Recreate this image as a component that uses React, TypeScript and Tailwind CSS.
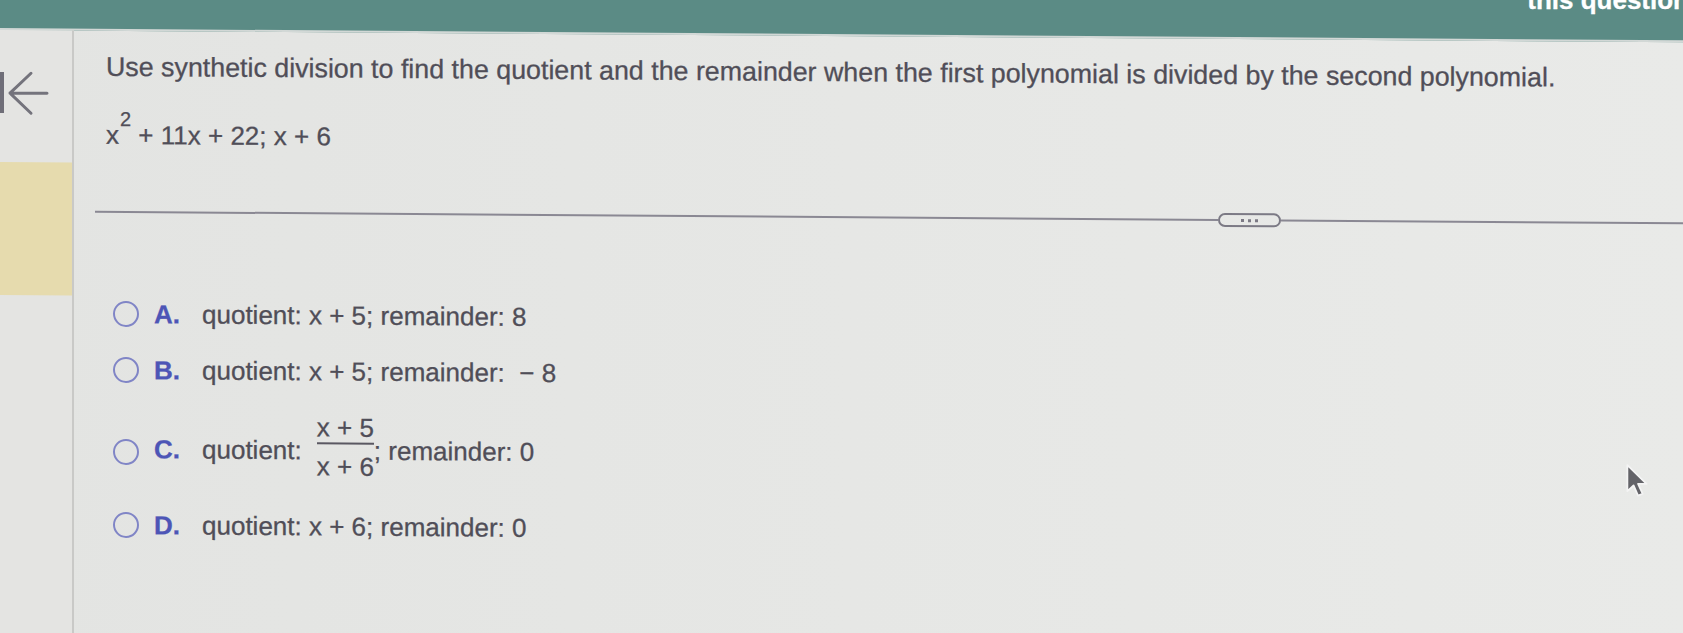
import React from "react";

function Radio({ shift = false }: { shift?: boolean }) {
  return (
    <div
      className={
        "w-[26px] h-[26px] shrink-0 rounded-full border-[2.5px] border-[#8085c6] " +
        (shift ? "mt-[6px]" : "")
      }
    />
  );
}

function Letter({ children }: { children: React.ReactNode }) {
  return (
    <span className="ml-[15px] w-[48px] shrink-0 font-bold text-[#4d55b6] leading-[30px]">
      {children}
    </span>
  );
}

export default function App() {
  return (
    <div className="w-[1683px] h-[633px] overflow-hidden bg-[#5b8b85] font-['Liberation_Sans',Arial,sans-serif] text-[26px] text-[#504e58] [-webkit-text-stroke:0.3px_currentcolor]">
      {/* header */}
      <div className="h-[28px] overflow-hidden flex justify-end">
        <span className="-mt-[15px] -mr-[6px] leading-[30px] font-bold text-white whitespace-nowrap">
          this question
        </span>
      </div>

      {/* page body (photo perspective) */}
      <div className="relative h-[640px] origin-top-left skew-y-[0.42deg] border-t-2 border-[#d2d8d6] bg-linear-to-r from-[#e3e4e2] to-[#e9eae8] flex">
        {/* sidebar */}
        <div className="w-[74px] shrink-0 border-r-2 border-[#c9c9c7] bg-[#e4e4e2] flex flex-col">
          <svg className="mt-[41px]" width="50" height="44" viewBox="0 0 50 44">
            <rect x="0" y="1" width="4" height="41" fill="#6f6e78" />
            <path
              d="M31 2 L10 22 L31 42 M10 22 L47 22"
              fill="none"
              stroke="#74737c"
              strokeWidth="3"
              strokeLinecap="round"
              strokeLinejoin="round"
            />
          </svg>
          <div className="mt-[47px] h-[133px] bg-[#e6dbae]" />
        </div>

        {/* main */}
        <div className="flex-1 pt-[19px] pl-[21px] flex flex-col">
          <div className="pl-[11px] pt-[2px] text-[26.8px] leading-[30px] whitespace-nowrap">
            Use synthetic division to find the quotient and the remainder when the first polynomial is divided by the second polynomial.
          </div>
          <div className="pl-[11px] mt-[38px] leading-[30px] whitespace-nowrap">
            x<span className="relative -top-[18px] ml-[1px] text-[20px] leading-none">2</span> + 11x + 22; x + 6
          </div>

          {/* separator with pill */}
          <div className="mt-[55px] h-[14px] flex items-center">
            <div className="w-[1123px] h-[2px] bg-[#8a8893]" />
            <div className="w-[63px] h-[14px] shrink-0 rounded-full border-2 border-[#7c7a85] flex items-center justify-center gap-[4px]">
              <span className="w-[3px] h-[3px] bg-[#7c7a85]" />
              <span className="w-[3px] h-[3px] bg-[#7c7a85]" />
              <span className="w-[3px] h-[3px] bg-[#7c7a85]" />
            </div>
            <div className="flex-1 h-[2px] bg-[#8a8893]" />
          </div>

          {/* options */}
          <div className="pl-[18px] flex flex-col">
            <div className="mt-[80px] h-[30px] flex items-center">
              <Radio />
              <Letter>A.</Letter>
              <span className="leading-[30px] whitespace-nowrap">quotient: x + 5; remainder: 8</span>
            </div>
            <div className="mt-[26px] h-[30px] flex items-center">
              <Radio />
              <Letter>B.</Letter>
              <span className="leading-[30px] whitespace-nowrap">quotient: x + 5; remainder:&nbsp; &minus; 8</span>
            </div>
            <div className="mt-[28px] flex items-center">
              <Radio shift />
              <Letter>C.</Letter>
              <span className="leading-[30px] whitespace-nowrap">quotient:</span>
              <div className="ml-[15px] pb-[7px] flex flex-col items-center">
                <span className="leading-[26px] whitespace-nowrap">x + 5</span>
                <div className="mt-[2px] w-full h-[2px] bg-[#5a5862]" />
                <span className="mt-[9px] leading-[26px] whitespace-nowrap">x + 6</span>
              </div>
              <span className="leading-[30px] whitespace-nowrap">; remainder: 0</span>
            </div>
            <div className="mt-[25px] h-[30px] flex items-center">
              <Radio />
              <Letter>D.</Letter>
              <span className="leading-[30px] whitespace-nowrap">quotient: x + 6; remainder: 0</span>
            </div>
          </div>
        </div>

        {/* mouse cursor */}
        <svg
          className="absolute left-[1625px] top-[421px]"
          width="25"
          height="36"
          viewBox="0 0 22 32"
        >
          <path
            d="M2 2 L2 25 L7.5 20 L11.5 29 L15.5 27.3 L11.5 18.5 L19 18.5 Z"
            fill="#636368"
            stroke="#f4f4f4"
            strokeWidth="1.6"
            strokeLinejoin="round"
          />
        </svg>
      </div>
    </div>
  );
}
